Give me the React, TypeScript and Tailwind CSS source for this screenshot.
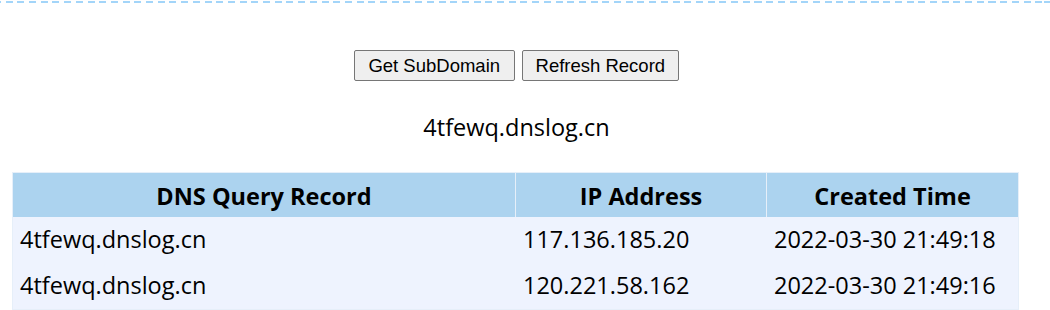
import React from 'react';

interface DnsRecord {
  domain: string;
  ip: string;
  created: string;
}

const records: DnsRecord[] = [
  { domain: '4tfewq.dnslog.cn', ip: '117.136.185.20', created: '2022-03-30 21:49:18' },
  { domain: '4tfewq.dnslog.cn', ip: '120.221.58.162', created: '2022-03-30 21:49:16' },
];

const App: React.FC = () => {
  return (
    <div className="w-[1050px] h-[310px] bg-white overflow-hidden font-['Open_Sans',sans-serif] text-black">
      {/* dashed divider from the section above */}
      <div className="h-[2px] mt-px bg-[repeating-linear-gradient(90deg,#a3d5f9_0_7px,transparent_7px_11.7px)] bg-[position:-6px_0]" />

      <div className="w-[1033px]">
        <div className="flex justify-center gap-[7px] pt-[47px]">
          <button className="h-[31px] px-[13.5px] bg-[#efefef] border border-[#767676] rounded-[2px] text-[18.5px] font-['Liberation_Sans',sans-serif] text-black">
            Get SubDomain
          </button>
          <button className="h-[31px] px-[13px] bg-[#efefef] border border-[#767676] rounded-[2px] text-[18.5px] font-['Liberation_Sans',sans-serif] text-black">
            Refresh Record
          </button>
        </div>

        <div className="text-center text-[23.5px] leading-[28px] mt-[32px]">4tfewq.dnslog.cn</div>

        <div className="ml-[12px] mt-[31px] w-[1007px] bg-[#e6eff9] p-px">
          <div className="grid grid-cols-[502px_250px_1fr] gap-x-[1px]">
            <div className="h-[44px] flex items-center justify-center pt-[3px] bg-[#acd3ef] text-[23.5px] font-bold">DNS Query Record</div>
            <div className="h-[44px] flex items-center justify-center pt-[3px] bg-[#acd3ef] text-[23.5px] font-bold">IP Address</div>
            <div className="h-[44px] flex items-center justify-center pt-[3px] bg-[#acd3ef] text-[23.5px] font-bold">Created Time</div>
          </div>
          {records.map((r, i) => (
            <div key={i} className="grid grid-cols-[502px_250px_1fr] gap-x-[1px] bg-[#eef3fe]">
              <div className="h-[46px] flex items-center pl-[7px] text-[23.5px]">{r.domain}</div>
              <div className="h-[46px] flex items-center pl-[7px] text-[23.5px]">{r.ip}</div>
              <div className="h-[46px] flex items-center pl-[7px] text-[23.5px]">{r.created}</div>
            </div>
          ))}
        </div>
      </div>
    </div>
  );
};

export default App;
